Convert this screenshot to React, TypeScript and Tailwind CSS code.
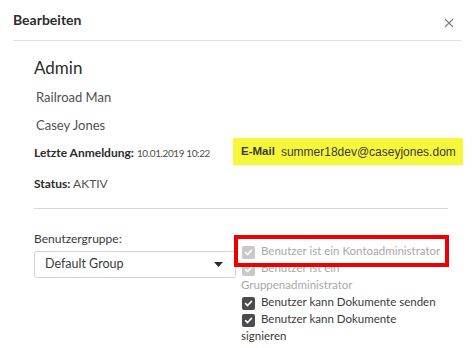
import React from "react";

function Check({ disabled }: { disabled?: boolean }) {
  return (
    <span
      className={`inline-flex items-center justify-center w-[13px] h-[13px] rounded-[2px] align-[-2px] mr-[6px] ${
        disabled ? "bg-[#c9c9c9]" : "bg-[#4b4b4b]"
      }`}
    >
      <svg width="9" height="9" viewBox="0 0 10 10" fill="none">
        <path
          d="M1.8 5.2 L4 7.3 L8.3 2.6"
          stroke="white"
          strokeWidth="1.8"
          strokeLinecap="round"
          strokeLinejoin="round"
        />
      </svg>
    </span>
  );
}

export default function App() {
  return (
    <div
      className="relative w-[474px] h-[348px] overflow-hidden bg-white text-[#4b4b4b]"
      style={{ fontFamily: "Lato, 'Noto Sans', sans-serif" }}
    >
      {/* Header */}
      <div className="mx-[13px] h-[41px] flex items-center justify-between border-b border-[#e1e1e1]">
        <span className="text-[14px] font-bold text-[#2c2c2c] -mt-[1px]">Bearbeiten</span>
        <svg width="10" height="10" viewBox="0 0 10 10" className="mr-[7px] mt-[6px]">
          <path d="M1 1 L9 9 M9 1 L1 9" stroke="#7a7a7a" strokeWidth="1.1" />
        </svg>
      </div>

      <div className="pl-[34px] pr-[10px]">
        <div className="pt-[16px] text-[17px] leading-[22px] text-[#2c2c2c]">Admin</div>
        <div className="mt-[9px] pl-[2px] text-[13px] leading-[18px] text-[#505050]">Railroad Man</div>
        <div className="mt-[10px] pl-[2px] text-[13px] leading-[18px] text-[#505050]">Casey Jones</div>

        <div className="mt-[4px] grid grid-cols-[199px_230px] items-center">
          <div className="text-[12px] leading-[18px] pt-[2px] whitespace-nowrap">
            <span className="font-bold text-[#2c2c2c]">Letzte Anmeldung:</span>{" "}
            <span className="text-[10px] tracking-[-0.4px] text-[#505050]">10.01.2019 10:22</span>
          </div>
          <div
            className="h-[27px] bg-[#f7f73a] flex items-center pl-[8px] gap-[6px] text-[#3a3a3a] whitespace-nowrap"
            style={{ fontFamily: "'Liberation Sans', Arial, sans-serif" }}
          >
            <span className="text-[11.5px] font-bold">E-Mail</span>
            <span className="text-[12px]">summer18dev@caseyjones.dom</span>
          </div>
        </div>

        <div className="mt-[10px] text-[12px] leading-[18px]">
          <span className="font-bold text-[#2c2c2c]">Status:</span>{" "}
          <span className="text-[#505050]">AKTIV</span>
        </div>

        <div className="mt-[15px] w-[414px] border-t border-[#d6d6d6]" />

        <div className="mt-[22px] grid grid-cols-[207px_220px]">
          <div>
            <div className="text-[12px] leading-[16px] text-[#3a3a3a]">Benutzergruppe:</div>
            <div className="mt-[4px] w-[202px] h-[27px] border border-[#d3d3d3] rounded-[3px] flex items-center justify-between pl-[10px] pr-[12px]">
              <span className="text-[12.5px] text-[#3a3a3a]">Default Group</span>
              <svg width="9" height="5" viewBox="0 0 9 5">
                <path d="M0 0 H9 L4.5 5 Z" fill="#2c2c2c" />
              </svg>
            </div>
          </div>
          <div className="pt-[11px] text-[11.5px] leading-[17px]">
            <div className="text-[#a8a8a8] pl-[1px]">
              <Check disabled />
              Benutzer ist ein Kontoadministrator
            </div>
            <div className="text-[#a8a8a8] pl-[1px]">
              <Check disabled />
              Benutzer ist ein
              <br />
              <span className="-ml-[1px]">Gruppenadministrator</span>
            </div>
            <div className="text-[#3a3a3a] pl-[1px]">
              <Check />
              Benutzer kann Dokumente senden
            </div>
            <div className="text-[#3a3a3a] pl-[1px]">
              <Check />
              Benutzer kann Dokumente
              <br />
              <span className="-ml-[1px]">signieren</span>
            </div>
          </div>
        </div>
      </div>

      {/* Annotation highlight */}
      <div className="absolute left-[234px] top-[235px] w-[215px] h-[32px] border-[4px] border-[#ee0000]" />
    </div>
  );
}
